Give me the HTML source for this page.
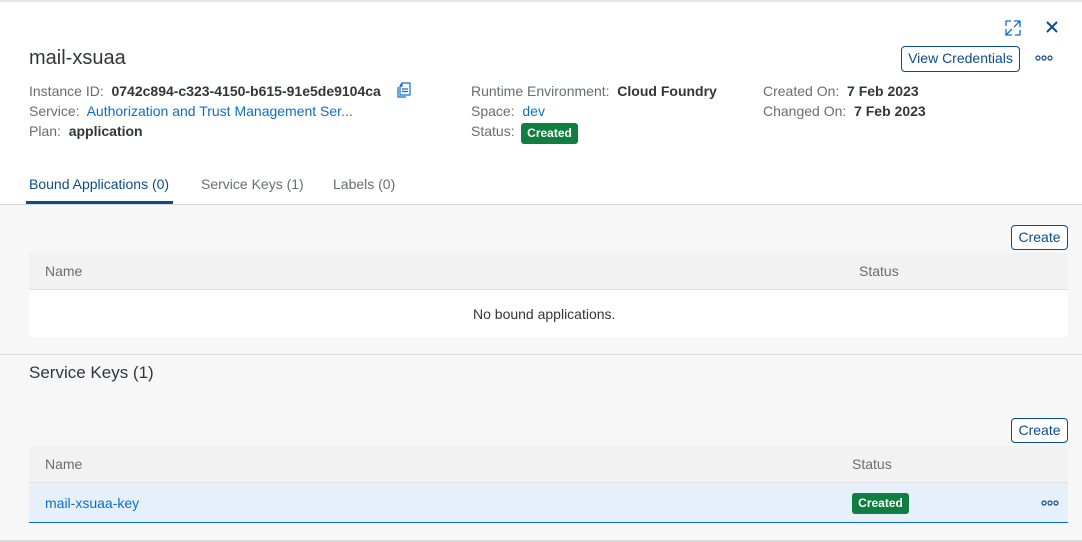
<!DOCTYPE html>
<html><head><style>
*{box-sizing:border-box;margin:0;padding:0}
body{width:1082px;height:542px;overflow:hidden;background:#f7f7f7;font-family:"Liberation Sans",sans-serif;font-size:14px;color:#32363a;position:relative}
.a{position:absolute;white-space:nowrap}
.lbl{color:#6a6d70}
.b{font-weight:bold;color:#32363a}
.lnk{color:#0a6ed1}
.btn{position:absolute;border:1px solid #0a4d8c;border-radius:4px;background:#fff;color:#0a4d8c;font-size:14px;text-align:center;line-height:23px}
.tag{position:absolute;background:#107e3e;color:#fff;font-weight:bold;font-size:12px;border-radius:3px;text-align:center;line-height:21px}
.dots{position:absolute;}
</style></head><body>
<div class="a" style="left:0;top:0;width:1082px;height:205px;background:#fff;border-top:2px solid #e5e5e5;border-bottom:1px solid #d9d9d9"></div>
<div class="a" style="left:29px;top:47px;font-size:20px;color:#32363a">mail-xsuaa</div>
<svg class="a" style="left:1004px;top:19px" width="18" height="18" viewBox="0 0 18 18" fill="none" stroke="#0a6ed1" stroke-width="1.3"><path d="M10 2h6v6M16 2l-6 6M2 10v6h6M2 16l6-6M2 7V2h5M16 11v5h-5"/></svg>
<svg class="a" style="left:1045px;top:20px" width="14" height="14" viewBox="0 0 14 14" stroke="#0a4d8c" stroke-width="2"><path d="M2 2l10 10M12 2L2 12"/></svg>
<div class="btn" style="left:901px;top:46px;width:119px;height:26px">View Credentials</div>
<svg class="a" style="left:1035px;top:55px" width="18" height="6"><g fill="none" stroke="#0a4d8c" stroke-width="1.2"><circle cx="3" cy="3" r="2"/><circle cx="9" cy="3" r="2"/><circle cx="15" cy="3" r="2"/></g></svg>
<div class="a" style="left:29px;top:83px"><span class="lbl">Instance ID:</span>&nbsp; <span class="b">0742c894-c323-4150-b615-91e5de9104ca</span></div>
<svg class="a" style="left:397px;top:81px" width="15" height="17" viewBox="0 0 15 17" fill="none" stroke="#0a6ed1" stroke-width="1.2"><path d="M5 2h8v12H3V5zM5 2v3H3M5 8h6M5 10.5h6"/><path d="M1 6v10h8"/></svg>
<div class="a" style="left:29px;top:103px"><span class="lbl">Service:</span>&nbsp; <span class="lnk">Authorization and Trust Management Ser...</span></div>
<div class="a" style="left:29px;top:123px"><span class="lbl">Plan:</span>&nbsp; <span class="b">application</span></div>
<div class="a" style="left:471px;top:83px"><span class="lbl">Runtime Environment:</span>&nbsp; <span class="b">Cloud Foundry</span></div>
<div class="a" style="left:471px;top:103px"><span class="lbl">Space:</span>&nbsp; <span class="lnk">dev</span></div>
<div class="a" style="left:471px;top:123px"><span class="lbl">Status:</span></div>
<div class="tag" style="left:521px;top:123px;width:57px;height:21px">Created</div>
<div class="a" style="left:763px;top:83px"><span class="lbl">Created On:</span>&nbsp; <span class="b">7 Feb 2023</span></div>
<div class="a" style="left:763px;top:103px"><span class="lbl">Changed On:</span>&nbsp; <span class="b">7 Feb 2023</span></div>
<div class="a" style="left:29px;top:176px;color:#0a4d8c">Bound Applications (0)</div>
<div class="a" style="left:26px;top:201px;width:147px;height:3px;background:#0a4d8c"></div>
<div class="a lbl" style="left:201px;top:176px">Service Keys (1)</div>
<div class="a lbl" style="left:333px;top:176px">Labels (0)</div>

<div class="btn" style="left:1011px;top:225px;width:57px;height:25px">Create</div>
<div class="a" style="left:29px;top:253px;width:1039px;height:37px;background:#f2f2f2;border-bottom:1px solid #e0e0e0"></div>
<div class="a lbl" style="left:45px;top:263px">Name</div>
<div class="a lbl" style="left:859px;top:263px">Status</div>
<div class="a" style="left:29px;top:290px;width:1039px;height:47px;background:#fff"></div>
<div class="a" style="left:473px;top:306px">No bound applications.</div>
<div class="a" style="left:0;top:354px;width:1082px;height:1px;background:#d9d9d9"></div>
<div class="a" style="left:29px;top:363px;font-size:17px">Service Keys (1)</div>

<div class="btn" style="left:1011px;top:418px;width:57px;height:25px">Create</div>
<div class="a" style="left:29px;top:446px;width:1039px;height:37px;background:#f2f2f2;border-bottom:1px solid #e0e0e0"></div>
<div class="a lbl" style="left:45px;top:456px">Name</div>
<div class="a lbl" style="left:852px;top:456px">Status</div>
<div class="a" style="left:29px;top:483px;width:1039px;height:40px;background:#e5f0fa;border-bottom:1px solid #0a6ed1"></div>
<div class="a lnk" style="left:45px;top:495px">mail-xsuaa-key</div>
<div class="tag" style="left:852px;top:493px;width:57px;height:21px">Created</div>
<svg class="a" style="left:1041px;top:500px" width="18" height="6"><g fill="none" stroke="#0a4d8c" stroke-width="1.2"><circle cx="3" cy="3" r="2"/><circle cx="9" cy="3" r="2"/><circle cx="15" cy="3" r="2"/></g></svg>
<div class="a" style="left:0;top:540px;width:1082px;height:2px;background:#d9d9d9"></div>
</body></html>
